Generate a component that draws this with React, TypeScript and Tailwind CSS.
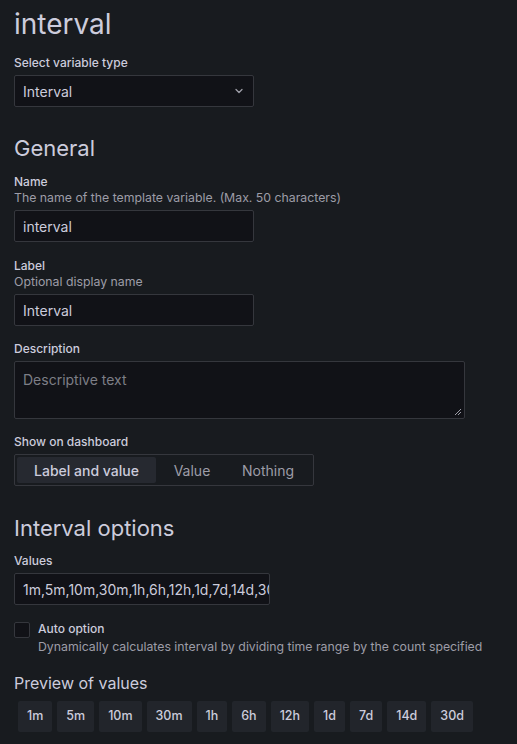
import { ChevronDown } from "lucide-react";

const PREVIEW = ["1m", "5m", "10m", "30m", "1h", "6h", "12h", "1d", "7d", "14d", "30d"];

function FieldLabel({ title, desc }: { title: string; desc?: string }) {
  return (
    <div className="mb-[4px]">
      <div className="text-[12px] font-medium leading-[16px] text-[#ccccdc]">{title}</div>
      {desc && <div className="text-[12.3px] leading-[16px] text-[#9d9da7]">{desc}</div>}
    </div>
  );
}

function TextBox({ value, width }: { value: string; width: string }) {
  return (
    <div
      className={`${width} h-[32px] flex items-center overflow-hidden whitespace-nowrap rounded-[2px] border border-[#35373d] bg-[#111217] px-[8px] text-[14px] text-[#ccccdc]`}
    >
      {value}
    </div>
  );
}

export default function App() {
  return (
    <div className="min-h-[744px] bg-[#181b1f] px-[14px] pt-[6px] pb-[10px] font-['Inter',sans-serif] text-[#ccccdc]">
      <h1 className="text-[28px] font-normal leading-[36px]">interval</h1>

      {/* Variable type */}
      <div className="mt-[13px]">
        <FieldLabel title="Select variable type" />
        <div className="flex h-[32px] w-[240px] items-center justify-between rounded-[2px] border border-[#35373d] bg-[#111217] px-[8px] text-[14px]">
          <span>Interval</span>
          <ChevronDown className="h-[12px] w-[12px] text-[#a0a0aa]" strokeWidth={2.5} />
        </div>
      </div>

      {/* General */}
      <h2 className="mt-[26px] text-[22px] font-normal leading-[30px]">General</h2>

      <div className="mt-[11px]">
        <FieldLabel title="Name" desc="The name of the template variable. (Max. 50 characters)" />
        <TextBox value="interval" width="w-[240px]" />
      </div>

      <div className="mt-[16px]">
        <FieldLabel title="Label" desc="Optional display name" />
        <TextBox value="Interval" width="w-[240px]" />
      </div>

      <div className="mt-[15px]">
        <FieldLabel title="Description" />
        <div className="relative h-[58px] w-[451px] rounded-[2px] border border-[#35373d] bg-[#111217] px-[8px] pt-[7px] text-[14px] text-[#7d7e86]">
          Descriptive text
          <svg className="absolute bottom-[2px] right-[2px]" width="8" height="8" viewBox="0 0 8 8">
            <path d="M7 1L1 7M7 4L4 7" stroke="#9d9da7" strokeWidth="1" />
          </svg>
        </div>
      </div>

      <div className="mt-[15px]">
        <FieldLabel title="Show on dashboard" />
        <div className="flex h-[32px] w-[300px] items-center gap-[2px] rounded-[2px] border border-[#35373d] p-[2px] text-[14px]">
          <div className="flex h-full w-[139px] items-center justify-center rounded-[2px] bg-[#262930] font-medium text-[#ccccdc]">
            Label and value
          </div>
          <div className="flex h-full w-[68px] items-center justify-center text-[#9d9da7]">Value</div>
          <div className="flex h-full w-[80px] items-center justify-center text-[#9d9da7]">Nothing</div>
        </div>
      </div>

      {/* Interval options */}
      <h2 className="mt-[27px] text-[22px] font-normal leading-[30px]">Interval options</h2>

      <div className="mt-[10px]">
        <FieldLabel title="Values" />
        <TextBox value="1m,5m,10m,30m,1h,6h,12h,1d,7d,14d,30d" width="w-[256px]" />
      </div>

      <div className="mt-[15px] flex gap-[8px]">
        <div className="mt-[2px] h-[16px] w-[16px] rounded-[2px] border border-[#35373d] bg-[#111217]" />
        <div>
          <div className="text-[12px] font-medium leading-[18px]">Auto option</div>
          <div className="text-[12.3px] leading-[18px] text-[#9d9da7]">
            Dynamically calculates interval by dividing time range by the count specified
          </div>
        </div>
      </div>

      <h3 className="mt-[16px] text-[16px] font-normal leading-[22px]">Preview of values</h3>
      <div className="mt-[7px] flex gap-[5px] pl-[4px]">
        {PREVIEW.map((v) => (
          <div
            key={v}
            className="flex h-[31px] items-center rounded-[2px] bg-[#22252b] px-[9px] text-[12.5px] font-medium text-[#ccccdc]"
          >
            {v}
          </div>
        ))}
      </div>
    </div>
  );
}
